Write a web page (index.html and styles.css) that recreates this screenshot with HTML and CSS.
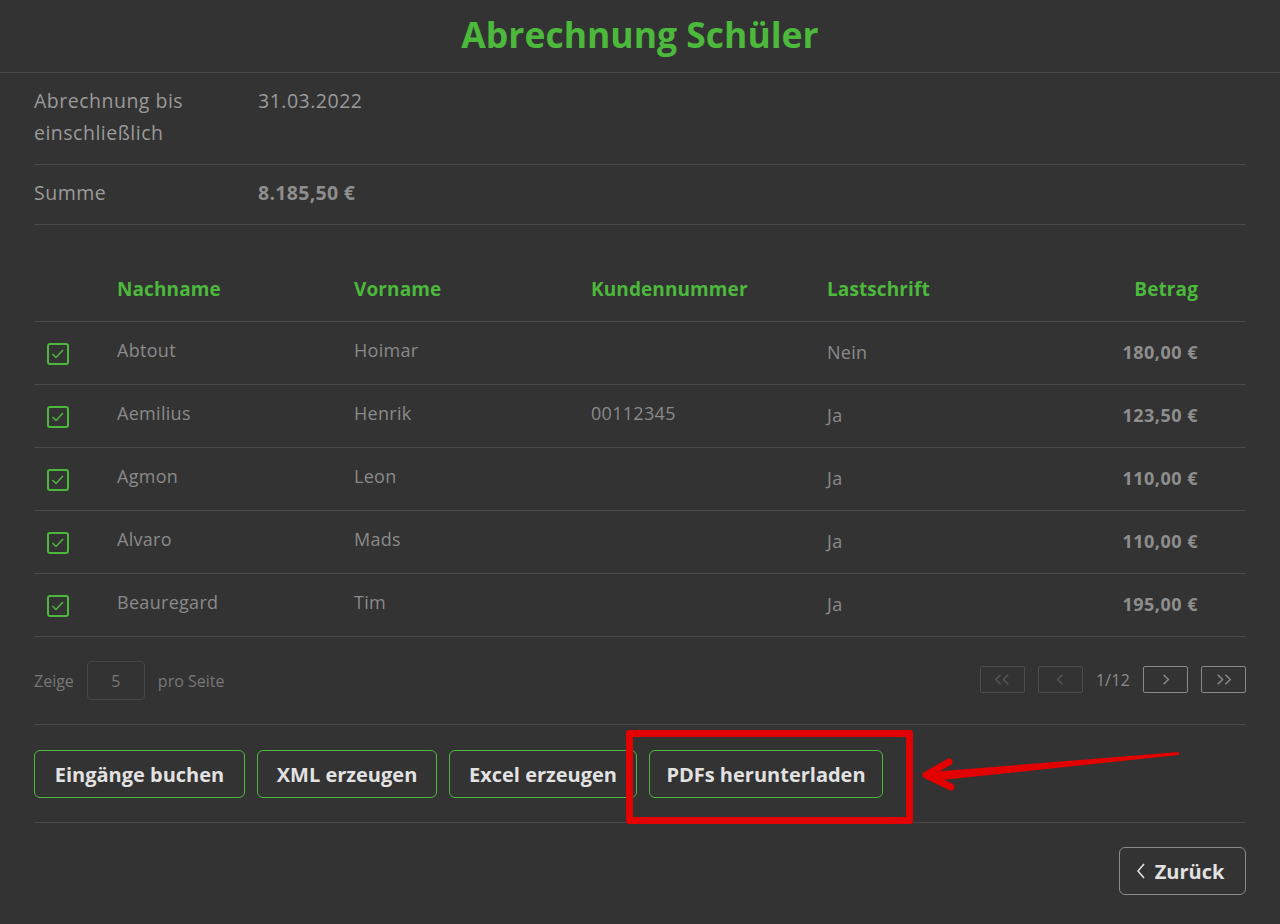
FILE: index.html
```html
<!DOCTYPE html>
<html lang="de">
<head>
<meta charset="utf-8">
<title>Abrechnung Schüler</title>
<link rel="stylesheet" href="styles.css">
</head>
<body>
<header class="topbar">
  <h1 class="title">Abrechnung Schüler</h1>
</header>
<main class="content">
  <section class="info">
    <div class="info-row">
      <div class="info-label">Abrechnung bis<br>einschließlich</div>
      <div class="info-value">31.03.2022</div>
    </div>
    <div class="info-row">
      <div class="info-label">Summe</div>
      <div class="info-value strong">8.185,50 €</div>
    </div>
  </section>

  <section class="table">
    <div class="trow thead">
      <div class="cell"></div>
      <div class="cell">Nachname</div>
      <div class="cell">Vorname</div>
      <div class="cell">Kundennummer</div>
      <div class="cell">Lastschrift</div>
      <div class="cell num">Betrag</div>
    </div>
    <div class="trow">
      <div class="cell"><span class="check"><svg viewBox="0 0 18 18"><polyline points="3.5,9 7,12.5 14,5"/></svg></span></div>
      <div class="cell name">Abtout</div>
      <div class="cell name">Hoimar</div>
      <div class="cell name"></div>
      <div class="cell low">Nein</div>
      <div class="cell num low">180,00 €</div>
    </div>
    <div class="trow">
      <div class="cell"><span class="check"><svg viewBox="0 0 18 18"><polyline points="3.5,9 7,12.5 14,5"/></svg></span></div>
      <div class="cell name">Aemilius</div>
      <div class="cell name">Henrik</div>
      <div class="cell name">00112345</div>
      <div class="cell low">Ja</div>
      <div class="cell num low">123,50 €</div>
    </div>
    <div class="trow">
      <div class="cell"><span class="check"><svg viewBox="0 0 18 18"><polyline points="3.5,9 7,12.5 14,5"/></svg></span></div>
      <div class="cell name">Agmon</div>
      <div class="cell name">Leon</div>
      <div class="cell name"></div>
      <div class="cell low">Ja</div>
      <div class="cell num low">110,00 €</div>
    </div>
    <div class="trow">
      <div class="cell"><span class="check"><svg viewBox="0 0 18 18"><polyline points="3.5,9 7,12.5 14,5"/></svg></span></div>
      <div class="cell name">Alvaro</div>
      <div class="cell name">Mads</div>
      <div class="cell name"></div>
      <div class="cell low">Ja</div>
      <div class="cell num low">110,00 €</div>
    </div>
    <div class="trow">
      <div class="cell"><span class="check"><svg viewBox="0 0 18 18"><polyline points="3.5,9 7,12.5 14,5"/></svg></span></div>
      <div class="cell name">Beauregard</div>
      <div class="cell name">Tim</div>
      <div class="cell name"></div>
      <div class="cell low">Ja</div>
      <div class="cell num low">195,00 €</div>
    </div>
  </section>

  <section class="pager">
    <div class="perpage">
      <span class="pp-label">Zeige</span>
      <span class="pp-input">5</span>
      <span class="pp-label">pro Seite</span>
    </div>
    <div class="pages">
      <span class="pbtn dim"><svg viewBox="0 0 44 26"><polyline points="20,8 15,13 20,18"/><polyline points="28,8 23,13 28,18"/></svg></span>
      <span class="pbtn dim"><svg viewBox="0 0 44 26"><polyline points="24,8 19,13 24,18"/></svg></span>
      <span class="pnum">1/12</span>
      <span class="pbtn"><svg viewBox="0 0 44 26"><polyline points="20,8 25,13 20,18"/></svg></span>
      <span class="pbtn"><svg viewBox="0 0 44 26"><polyline points="16,8 21,13 16,18"/><polyline points="24,8 29,13 24,18"/></svg></span>
    </div>
  </section>

  <section class="actions">
    <button class="btn w1">Eingänge buchen</button>
    <button class="btn w2">XML erzeugen</button>
    <button class="btn w3">Excel erzeugen</button>
    <button class="btn w4">PDFs herunterladen</button>
  </section>

  <div class="footer">
    <button class="btn back"><svg class="back-ico" viewBox="0 0 12 20"><polyline points="9,3 3,10 9,17"/></svg>Zurück</button>
  </div>
</main>

<div class="mark-box"></div>
<svg class="mark-arrow" viewBox="0 0 280 60" width="280" height="60">
  <polygon points="14,27 263,7 263,10 16,36" fill="#e20000"/>
  <polyline points="33,17 10,30 35,42" fill="none" stroke="#e20000" stroke-width="7" stroke-linecap="round" stroke-linejoin="round"/>
</svg>
</body>
</html>
```

FILE: styles.css
```css
* { box-sizing: border-box; }
html, body { margin: 0; padding: 0; }
body {
  background: #333333;
  font-family: "Open Sans", Lato, sans-serif;
  color: #9a9a9a;
  width: 1280px;
  height: 924px;
  position: relative;
  overflow: hidden;
}
.topbar {
  height: 73px;
  border-bottom: 1px solid #4a4a4a;
  display: flex;
  align-items: center;
  justify-content: center;
}
.title {
  margin: 0 0 5px 0;
  font-size: 35.5px;
  font-weight: 700;
  color: #4cb83c;
  letter-spacing: 0;
}
.content {
  padding: 0 34px;
}
.info-row {
  display: grid;
  grid-template-columns: 224px 1fr;
  border-bottom: 1px solid #4a4a4a;
  font-size: 19.5px;
  letter-spacing: 0.5px;
  line-height: 32px;
  padding: 12px 0 15px;
}
.info-row + .info-row {
  padding: 12px 0 15px;
}
.info-label { color: #9a9a9a; }
.info-value { color: #9a9a9a; }
.info-value.strong { font-weight: 700; color: #8e8e8e; letter-spacing: 0.3px; }

.table { margin-top: 31px; }
.trow {
  display: grid;
  grid-template-columns: 83px 237px 237px 236px 1fr 200px;
  height: 63px;
  border-bottom: 1px solid #4a4a4a;
  align-items: center;
  font-size: 18px;
  letter-spacing: 0.3px;
  color: #8a8a8a;
}
.trow.thead {
  height: 66px;
  color: #4cb83c;
  font-weight: 700;
  font-size: 19px;
  letter-spacing: 0.1px;
}
.cell { white-space: nowrap; }
.cell.name { padding-bottom: 7px; }
.cell.low { padding-bottom: 2px; }
.cell.num { text-align: right; padding-right: 48px; }
.trow:not(.thead) .cell.num { font-weight: 700; color: #8e8e8e; letter-spacing: 0.5px; }
.check {
  display: block;
  margin-left: 13px;
  margin-top: 1px;
  width: 22px;
  height: 22px;
  border: 2px solid #4cb83c;
  border-radius: 3px;
}
.check svg {
  display: block;
  width: 18px;
  height: 18px;
  fill: none;
  stroke: #4cb83c;
  stroke-width: 1.5;
}

.pager {
  height: 88px;
  border-bottom: 1px solid #4a4a4a;
  display: flex;
  align-items: center;
  justify-content: space-between;
  font-size: 16px;
  color: #777;
}
.perpage { display: flex; align-items: center; }
.pp-input {
  width: 58px;
  height: 39px;
  margin: 0 13px 0 13px;
  border: 1px solid #464646;
  border-radius: 4px;
  display: flex;
  align-items: center;
  justify-content: center;
  color: #777;
}
.pages { display: flex; align-items: center; gap: 13px; margin-top: -2px; }
.pbtn {
  width: 45px;
  height: 27px;
  border: 1.5px solid #8a8a8a;
  border-radius: 2px;
  display: block;
}
.pbtn svg {
  display: block;
  width: 100%;
  height: 100%;
  fill: none;
  stroke: #8a8a8a;
  stroke-width: 1.5;
}
.pbtn.dim { border-color: #4c4c4c; }
.pbtn.dim svg { stroke: #555; }
.pnum { color: #8a8a8a; font-size: 16.5px; }

.actions {
  display: flex;
  gap: 12px;
  padding: 25px 0 24px;
  border-bottom: 1px solid #4a4a4a;
}
.btn {
  height: 48px;
  padding: 0;
  background: transparent;
  border: 1px solid #4cb83c;
  border-radius: 6px;
  color: #e2e2e2;
  font-family: "Open Sans", Lato, sans-serif;
  font-size: 20px;
  font-weight: 700;
  cursor: pointer;
}
.btn.w1 { width: 211px; }
.btn.w2 { width: 180px; }
.btn.w3 { width: 188px; }
.btn.w4 { width: 234px; }
.footer {
  display: flex;
  justify-content: flex-end;
  padding-top: 24px;
}
.btn.back {
  border-color: #8a8a8a;
  width: 127px;
  height: 48px;
  display: flex;
  align-items: center;
  justify-content: center;
  gap: 8px;
  padding: 0 6px 0 0;
}
.back-ico {
  width: 12px;
  height: 20px;
  fill: none;
  stroke: #e2e2e2;
  stroke-width: 1.6;
}

.mark-box {
  position: absolute;
  left: 626px;
  top: 730px;
  width: 287px;
  height: 94px;
  border: 7px solid #e20000;
  border-radius: 3px;
}
.mark-arrow {
  position: absolute;
  left: 916px;
  top: 745px;
}
```
